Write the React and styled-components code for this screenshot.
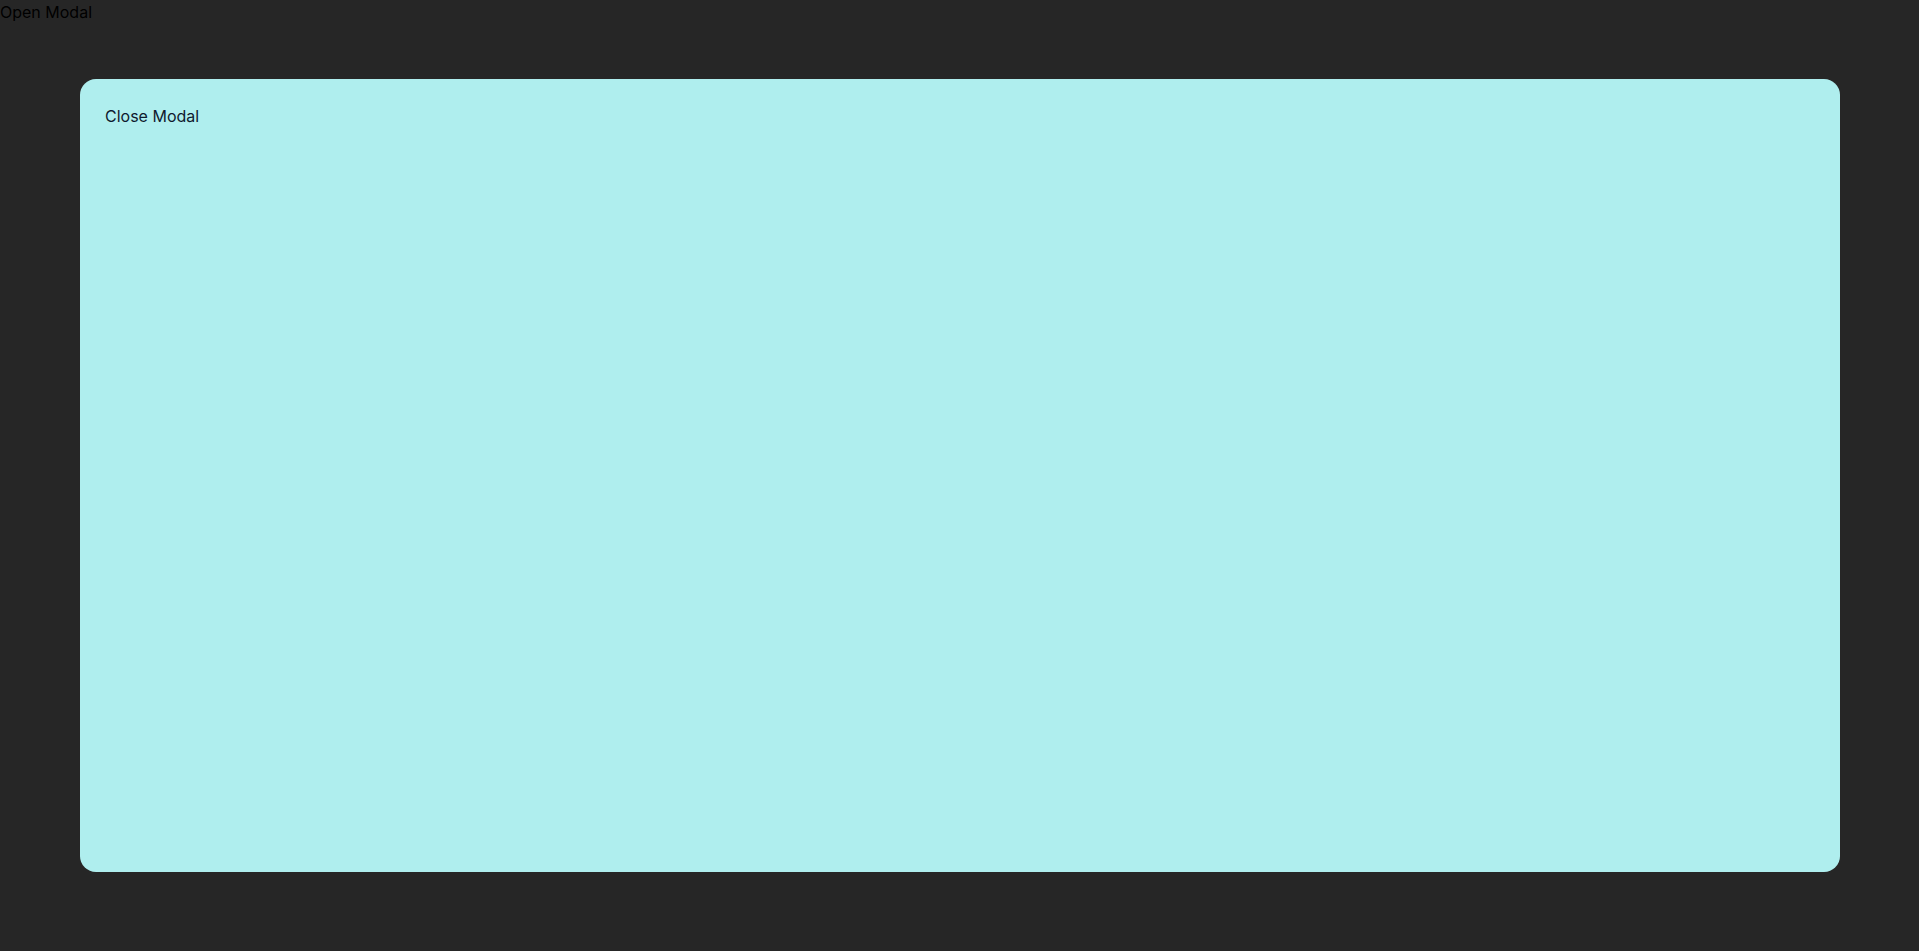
import styled, { createGlobalStyle } from 'styled-components';

const GlobalStyle = createGlobalStyle`
	html, body {
		margin: 0;
		padding: 0;
		background: #ffffff;
		font-family: Inter, "Noto Sans", sans-serif;
		line-height: 1.5;
	}
`;

const TriggerButton = styled.button`
	display: block;
	margin: 0;
	padding: 0;
	border: none;
	background: none;
	font: inherit;
	font-size: 16px;
	line-height: 1.5;
	color: #000;
	cursor: pointer;
`;

const Overlay = styled.div`
	position: fixed;
	inset: 0;
	background: rgba(0, 0, 0, 0.85);
	padding: 79px 79px 79px 80px;
	box-sizing: border-box;
	display: flex;
`;

const ModalBox = styled.div`
	flex: 1;
	background: #afeeee;
	border-radius: 16px;
	padding: 25px;
	box-sizing: border-box;
`;

const CloseButton = styled.button`
	margin: 0;
	padding: 0;
	border: none;
	background: none;
	font: inherit;
	font-size: 16px;
	line-height: 1.5;
	color: #0f1a2e;
	cursor: pointer;
`;

const App = () => {
	return (
		<>
			<GlobalStyle />
			<TriggerButton>Open Modal</TriggerButton>
			<Overlay>
				<ModalBox>
					<CloseButton>Close Modal</CloseButton>
				</ModalBox>
			</Overlay>
		</>
	);
};

export default App;
